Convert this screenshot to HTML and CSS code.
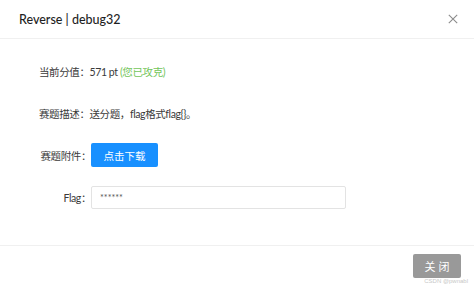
FILE: index.html
```html
<!DOCTYPE html>
<html lang="zh-CN">
<head>
<meta charset="utf-8">
<link rel="stylesheet" href="styles.css">
</head>
<body>
<div class="modal">
  <div class="modal-header">
    <div class="modal-title">Reverse | debug32</div>
    <span class="modal-close" aria-label="close">
      <svg width="10" height="10" viewBox="0 0 10 10"><path d="M0.8 0.8 L9.2 9.2 M9.2 0.8 L0.8 9.2" stroke="#8c8c8c" stroke-width="1.1" fill="none"/></svg>
    </span>
  </div>
  <div class="modal-body">
    <div class="row text-row">当前分值：571 pt&nbsp;<span class="solved">(您已攻克)</span></div>
    <div class="row text-row">赛题描述：送分题，flag格式flag{}。</div>
    <div class="row form-row">
      <label class="form-label">赛题附件：</label>
      <button class="btn-primary">点击下载</button>
    </div>
    <div class="row form-row">
      <label class="form-label">Flag：</label>
      <input class="flag-input" type="text" value="******">
    </div>
  </div>
  <div class="modal-footer">
    <button class="btn-close">关闭</button>
  </div>
  <div class="watermark">CSDN @pwnabl</div>
</div>
</body>
</html>
```
FILE: styles.css
```css
html, body {
  margin: 0;
  padding: 0;
  background: #ffffff;
}
body {
  font-family: "Lato", "Noto Sans CJK SC", sans-serif;
}
.modal {
  width: 474px;
  height: 286px;
  display: flex;
  flex-direction: column;
  position: relative;
  overflow: hidden;
}
.modal-header {
  height: 39px;
  box-sizing: border-box;
  border-bottom: 1px solid #f0f0f0;
  display: flex;
  align-items: center;
  justify-content: space-between;
  padding: 0 16px 0 19px;
}
.modal-title {
  font-size: 12.5px;
  color: #1f1f1f;
  font-weight: 500;
}
.modal-close {
  display: flex;
  width: 10px;
  height: 10px;
}
.modal-body {
  padding: 20px 0 36px 0;
  display: flex;
  flex-direction: column;
  gap: 18px;
  font-size: 10.5px;
  letter-spacing: -0.4px;
  color: #3a3a3a;
}
.row {
  height: 24px;
  display: flex;
  align-items: center;
}
.text-row {
  padding-left: 39px;
}
.solved {
  color: #73c55a;
}
.form-label {
  width: 91px;
  text-align: right;
  flex: none;
}
.btn-primary {
  width: 67px;
  height: 24px;
  background: #1890ff;
  color: #ffffff;
  border: none;
  border-radius: 2px;
  font-family: "Lato", "Noto Sans CJK SC", sans-serif;
  font-size: 10.5px;
  letter-spacing: 0;
  padding: 0;
}
.flag-input {
  width: 255px;
  height: 23px;
  box-sizing: border-box;
  border: 1px solid #e3e3e3;
  border-radius: 2px;
  padding: 0 8px;
  font-family: "Lato", "Noto Sans CJK SC", sans-serif;
  font-size: 9px;
  letter-spacing: 0;
  color: #555555;
  outline: none;
}
.modal-footer {
  flex: 1;
  border-top: 1px solid #f0f0f0;
  display: flex;
  justify-content: flex-end;
  align-items: flex-start;
  padding: 8px 13px 0 0;
}
.btn-close {
  width: 48px;
  height: 24px;
  background: #999999;
  color: #ffffff;
  border: none;
  border-radius: 2px;
  font-family: "Lato", "Noto Sans CJK SC", sans-serif;
  font-size: 11px;
  letter-spacing: 3px;
  padding: 0 0 0 3px;
}
.watermark {
  position: absolute;
  right: 6px;
  bottom: 2px;
  font-family: "Liberation Sans", sans-serif;
  font-size: 6px;
  color: #c8c8c8;
}
```
